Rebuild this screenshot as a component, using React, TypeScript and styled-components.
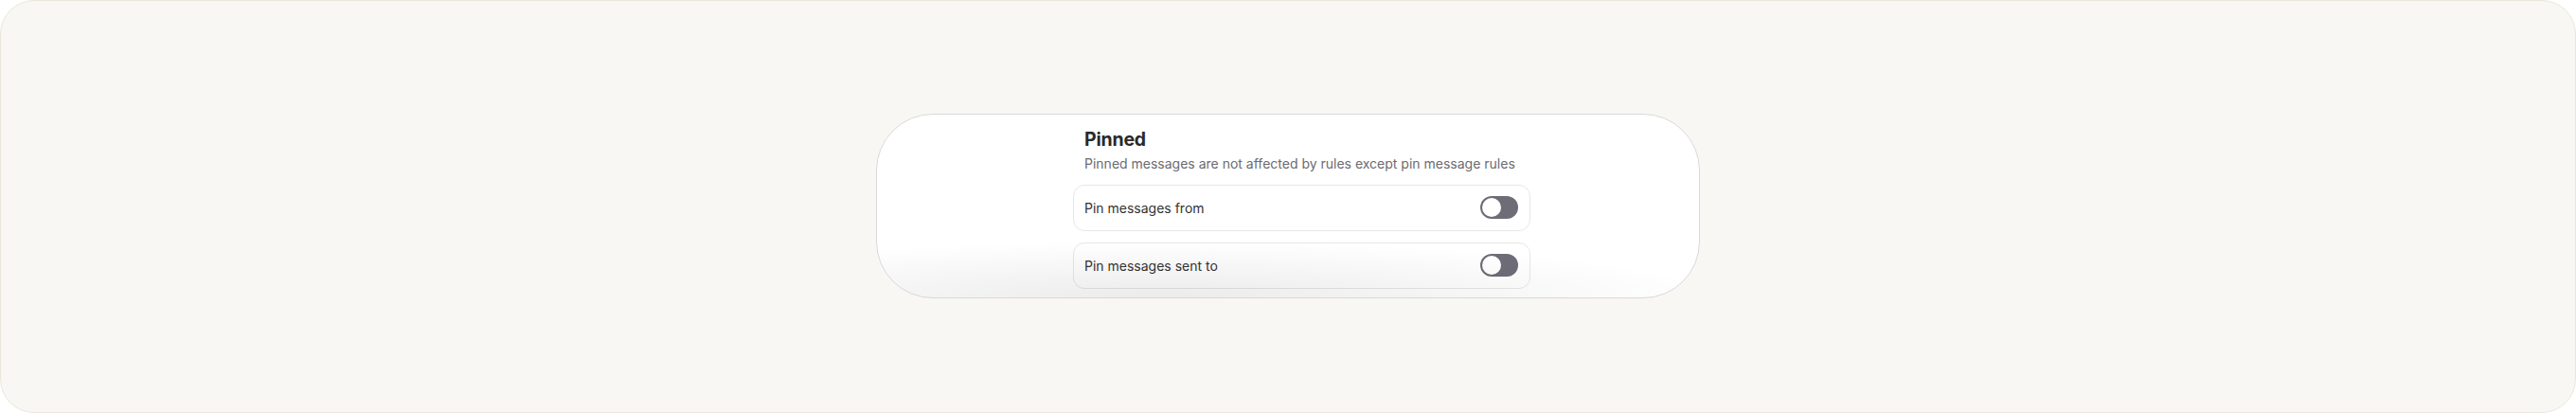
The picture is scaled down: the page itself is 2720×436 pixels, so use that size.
import React from "react";
import styled, { createGlobalStyle } from "styled-components";

const Global = createGlobalStyle`
  html, body { margin: 0; padding: 0; background: #ffffff; }
  * { box-sizing: border-box; }
  body { font-family: Inter, "Noto Sans", "Liberation Sans", sans-serif; -webkit-font-smoothing: antialiased; }
`;

const Frame = styled.div`
  width: 2720px;
  height: 436px;
  background: #f8f7f3;
  border: 1px solid #ebe6db;
  border-radius: 36px;
  display: flex;
  align-items: center;
  justify-content: center;
`;

const Card = styled.section`
  position: relative;
  width: 870px;
  height: 195px;
  margin-top: -2px;
  background: #ffffff;
  border: 1.5px solid #d9d9d9;
  border-radius: 60px;
  overflow: hidden;
  padding: 14px 178px 0 207px;
  display: flex;
  flex-direction: column;
`;

const Fade = styled.div`
  position: absolute;
  left: 0;
  right: 0;
  bottom: 0;
  height: 70px;
  pointer-events: none;
  background: radial-gradient(ellipse 80% 100% at 35% 100%, rgba(0, 0, 0, 0.08), rgba(0, 0, 0, 0) 85%);
`;

const Heading = styled.header`
  padding-left: 12px;
  display: flex;
  flex-direction: column;
`;

const Title = styled.h2`
  margin: 0;
  font-size: 19.5px;
  line-height: 25px;
  font-weight: 700;
  color: #2a2a2a;
  letter-spacing: -0.2px;
`;

const Subtitle = styled.p`
  margin: 3px 0 0;
  font-size: 14px;
  line-height: 20px;
  color: #6b6b70;
`;

const List = styled.div`
  margin-top: 12px;
  display: flex;
  flex-direction: column;
  gap: 12px;
`;

const Row = styled.div`
  height: 49px;
  border: 1px solid #e7e7e7;
  border-radius: 12px;
  background: #ffffff;
  display: flex;
  align-items: center;
  justify-content: space-between;
  padding: 0 12px 0 11px;
`;

const Label = styled.span`
  font-size: 14px;
  color: #333333;
`;

const Track = styled.span<{ $on?: boolean }>`
  width: 40px;
  height: 24px;
  border-radius: 12px;
  background: #6d6c77;
  padding: 2px;
  display: flex;
  justify-content: ${(p) => (p.$on ? "flex-end" : "flex-start")};
`;

const Knob = styled.span`
  width: 20px;
  height: 20px;
  border-radius: 50%;
  background: #ffffff;
`;

const Toggle = ({ on }: { on?: boolean }) => (
  <Track $on={on}>
    <Knob />
  </Track>
);

export default function App() {
  return (
    <>
      <Global />
      <Frame>
        <Card>
          <Heading>
            <Title>Pinned</Title>
            <Subtitle>Pinned messages are not affected by rules except pin message rules</Subtitle>
          </Heading>
          <List>
            <Row>
              <Label>Pin messages from</Label>
              <Toggle />
            </Row>
            <Row>
              <Label>Pin messages sent to</Label>
              <Toggle />
            </Row>
          </List>
          <Fade />
        </Card>
      </Frame>
    </>
  );
}
